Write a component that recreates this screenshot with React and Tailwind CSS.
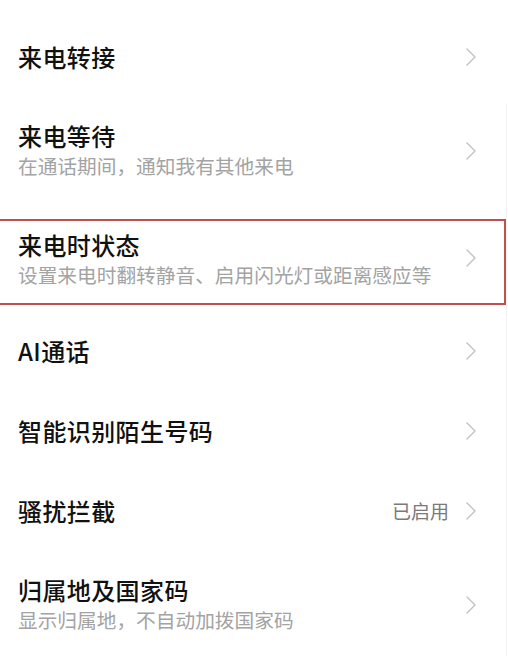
import React from "react";

function Chevron() {
  return (
    <svg width="12" height="20" viewBox="0 0 12 20" className="shrink-0" fill="none">
      <path d="M2 2 L10 10 L2 18" stroke="#c2c2c2" strokeWidth="1.4" strokeLinecap="round" strokeLinejoin="round" />
    </svg>
  );
}

function Row({ title, sub, value, h, highlight }) {
  return (
    <div className={`relative flex items-center pl-[18px] pr-[31px] ${h}`}>
      {highlight && (
        <div className="pointer-events-none absolute left-[-3px] right-[2px] top-[15px] bottom-[6px] border-2 border-[#bf5052]" />
      )}
      <div className={`flex-1 flex flex-col ${highlight ? "pt-[4px]" : ""}`}>
        <div className="text-[24px] leading-[30px] font-medium text-[#111] tracking-[0.4px]">{title}</div>
        {sub && <div className="text-[19.7px] leading-[30px] text-[#a3a3a3]">{sub}</div>}
      </div>
      {value && <span className="mr-[16px] text-[19px] text-[#7a7a7a]">{value}</span>}
      <Chevron />
    </div>
  );
}

export default function App() {
  return (
    <div
      className="w-[508px] h-[656px] overflow-hidden bg-white pt-[17px] relative"
      style={{ fontFamily: '"Noto Sans CJK SC", "Noto Sans", sans-serif' }}
    >
      <div className="absolute right-[1px] top-[103px] bottom-0 w-px bg-[#f3f3f3]" />
      <Row title="来电转接" h="h-[80px]" />
      <Row title="来电等待" sub="在通话期间，通知我有其他来电" h="h-[107px]" />
      <Row title="来电时状态" sub="设置来电时翻转静音、启用闪光灯或距离感应等" h="h-[107px]" highlight />
      <Row title="AI通话" h="h-[80px]" />
      <Row title="智能识别陌生号码" h="h-[80px]" />
      <Row title="骚扰拦截" value="已启用" h="h-[80px]" />
      <Row title="归属地及国家码" sub="显示归属地，不自动加拨国家码" h="h-[107px]" />
    </div>
  );
}
